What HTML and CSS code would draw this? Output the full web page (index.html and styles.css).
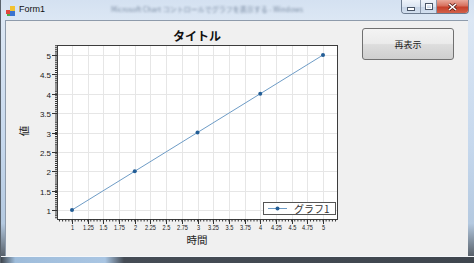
FILE: index.html
```html
<!DOCTYPE html>
<html lang="ja">
<head>
    <meta charset="UTF-8">
    <title>Form1</title>
    <link rel="stylesheet" href="styles.css">
</head>
<body>
<div class="window">
    <div class="titlebar">
        <svg class="app-icon" width="10" height="10" viewBox="0 0 10 10">
            <rect x="0" y="4" width="4" height="4" fill="#e0463a"/>
            <rect x="4" y="0" width="5" height="5" fill="#f2c230"/>
            <rect x="4" y="5" width="5" height="5" fill="#3b74d0"/>
            <rect x="1" y="8" width="3" height="2" fill="#4aa84a"/>
        </svg>
        <span class="title">Form1</span>
        <span class="ghost">Microsoft Chart コントロールでグラフを表示する - Windows</span>
        <div class="caption">
            <div class="cbtn min">
                <svg width="8" height="4" viewBox="0 0 8 4"><rect x="0.5" y="0.5" width="7" height="3" fill="#fff" stroke="#4a5668"/></svg>
            </div>
            <div class="cbtn max">
                <svg width="8" height="7" viewBox="0 0 8 7"><rect x="0.5" y="0.5" width="7" height="6" fill="none" stroke="#4a5668"/><rect x="1.5" y="1.5" width="5" height="4" fill="none" stroke="#fff"/></svg>
            </div>
            <div class="cbtn close">
                <svg width="9" height="8" viewBox="0 0 9 8"><path d="M1 1 L8 7 M8 1 L1 7" stroke="#5a2018" stroke-width="3"/><path d="M1 1 L8 7 M8 1 L1 7" stroke="#fff" stroke-width="1.6"/></svg>
            </div>
        </div>
    </div>
    <div class="client">
        <svg id="chart" class="chart" viewBox="6 21 349 235" width="349" height="235">
            <text class="chart-title" x="197" y="41" text-anchor="middle">タイトル</text>
            <rect x="57.5" y="45.5" width="280" height="174" fill="#fff"/>
            <g id="grid" stroke="#e6e6e6" stroke-width="1"></g>
            <rect x="57.5" y="45.5" width="280" height="174" fill="none" stroke="#3c3c3c"/>
            <line x1="56" y1="219" x2="56" y2="45" stroke="#333" stroke-width="2" stroke-dasharray="1 0.9375" stroke-dashoffset="1.1875"/>
            <line x1="57" y1="220.5" x2="337" y2="220.5" stroke="#333" stroke-width="2" stroke-dasharray="1 2.1375" stroke-dashoffset="1.1875"/>
            <g id="ticks" stroke="#333" stroke-width="1"></g>
            <g id="labels"></g>
            <polyline class="series" points="72,210 134.75,171.25 197.5,132.5 260.25,93.75 323,55"/>
            <g class="marker">
                <circle cx="72" cy="210" r="2"/>
                <circle cx="134.75" cy="171.25" r="2"/>
                <circle cx="197.5" cy="132.5" r="2"/>
                <circle cx="260.25" cy="93.75" r="2"/>
                <circle cx="323" cy="55" r="2"/>
            </g>
            <rect x="263.5" y="202.5" width="72" height="12" fill="#fff" stroke="#555"/>
            <line class="series" x1="268" y1="208.5" x2="287" y2="208.5"/>
            <circle class="marker" cx="277.5" cy="208.5" r="2"/>
            <text class="legend-text" x="294" y="212.5">グラフ1</text>
            <text class="axis-title" x="197" y="243.5" text-anchor="middle">時間</text>
            <text class="axis-title" x="0" y="0" text-anchor="middle" transform="translate(28 131) rotate(-90)">値</text>
        </svg>
        <button class="redraw">再表示</button>
    </div>
    <div class="bottom-frame"></div>
</div>
<script>
    var ns = "http://www.w3.org/2000/svg";
    var oGrid = document.getElementById("grid");
    var oTicks = document.getElementById("ticks");
    var oLabels = document.getElementById("labels");

    function px(v) {
        return 72 + (v - 1) * 62.75;
    }
    function py(v) {
        return 210 - (v - 1) * 38.75;
    }
    function add(parent, tag, attrs, text) {
        var el = document.createElementNS(ns, tag);
        for (var k in attrs) {
            el.setAttribute(k, attrs[k]);
        }
        if (text) {
            el.textContent = text;
        }
        parent.appendChild(el);
        return el;
    }

    for (var i = 0; i <= 16; i++) {
        var v = 1 + i * 0.25;
        var x = Math.round(px(v)) + 0.5;
        add(oGrid, "line", {x1: x, y1: 46, x2: x, y2: 219});
        add(oTicks, "line", {x1: x, y1: 219, x2: x, y2: 224});
        var s = String(v);
        var len = s.replace(".", "").length * 3.1 + (s.indexOf(".") > -1 ? 1.6 : 0);
        add(oLabels, "text", {"class": "xl", x: x, y: 229.5, "text-anchor": "middle",
            textLength: len, lengthAdjust: "spacingAndGlyphs"}, s);
    }
    for (var j = 0; j <= 8; j++) {
        var w = 1 + j * 0.5;
        var y = Math.round(py(w)) + 0.5;
        add(oGrid, "line", {x1: 58, y1: y, x2: 337, y2: y});
        add(oTicks, "line", {x1: 52, y1: y, x2: 57, y2: y});
        add(oLabels, "text", {"class": "yl", x: 51, y: y + 3, "text-anchor": "end"}, String(w));
    }
</script>
</body>
</html>
```

FILE: styles.css
```css
*{
    margin: 0;
    padding: 0;
}
body{
    background-color: #3d444c;
}
.window{
    width: 474px;
    height: 263px;
    display: flex;
    flex-direction: column;
    overflow: hidden;
    border-left: 1px solid #59626c;
    box-sizing: border-box;
    background: linear-gradient(to bottom, #d4e1f1 0, #dce7f4 20px, #c6d8ed 55%, #b4c9e0 85%, #5b646e 97%, #40474f 100%);
}
.titlebar{
    height: 20px;
    display: flex;
    align-items: flex-start;
    flex-shrink: 0;
}
.app-icon{
    margin: 6px 0 0 5px;
}
.title{
    margin-left: 3px;
    padding-top: 4px;
    font-family: "Liberation Sans", sans-serif;
    font-size: 9px;
    line-height: 11px;
    color: #111;
}
.ghost{
    margin-left: 66px;
    padding-top: 5px;
    white-space: nowrap;
    font-family: "Noto Sans CJK JP", sans-serif;
    font-size: 7px;
    line-height: 9px;
    color: #7d8ea4;
    filter: blur(1.2px);
}
.caption{
    margin-left: auto;
    margin-right: 5px;
    display: flex;
    height: 14px;
    border: 1px solid #6d7c90;
    border-top: none;
    border-radius: 0 0 4px 4px;
    overflow: hidden;
    box-sizing: border-box;
}
.cbtn{
    display: flex;
    align-items: center;
    justify-content: center;
    height: 13px;
}
.cbtn.min,
.cbtn.max{
    background: linear-gradient(to bottom, #eef3fa 0, #dbe5f2 50%, #c5d3e6 51%, #d3e0ef 100%);
    border-right: 1px solid #8a98ab;
}
.cbtn.min{
    width: 19px;
    align-items: flex-end;
    padding-bottom: 2px;
    box-sizing: border-box;
}
.cbtn.max{
    width: 15px;
}
.cbtn.close{
    width: 31px;
    background: linear-gradient(to bottom, #e9a99b 0, #d7705d 45%, #c6402a 55%, #d2604a 100%);
}
.client{
    margin: 0 5px 0 4px;
    width: 463px;
    height: 236px;
    flex-shrink: 0;
    display: flex;
    align-items: flex-start;
    background-color: #f0f0f0;
    border-top: 1px solid #8e9bab;
    border-left: 1px solid #8e9bab;
    box-sizing: border-box;
}
.chart{
    display: block;
    flex-shrink: 0;
}
.chart-title{
    font-family: "Noto Sans CJK JP", sans-serif;
    font-size: 12px;
    font-weight: bold;
    fill: #111;
}
.xl,
.yl{
    font-family: "Liberation Sans", sans-serif;
    font-size: 8px;
    fill: #1a1a1a;
}
.series{
    fill: none;
    stroke: #6e9cc6;
    stroke-width: 1;
}
.marker{
    fill: #245e96;
}
.legend-text{
    font-family: "Noto Sans CJK JP", sans-serif;
    font-size: 10px;
    fill: #333;
}
.axis-title{
    font-family: "Noto Sans CJK JP", sans-serif;
    font-size: 10.5px;
    fill: #222;
}
.redraw{
    width: 92px;
    height: 32px;
    margin: 7px 0 0 7px;
    border: 1px solid #707070;
    border-radius: 3px;
    background: linear-gradient(to bottom, #f3f3f3 0, #ebebeb 48%, #dddddd 52%, #cfcfcf 100%);
    font-family: "Noto Sans CJK JP", sans-serif;
    font-size: 9px;
    color: #222;
}
.bottom-frame{
    flex: 1;
    background: linear-gradient(to right, #3f464e 0, #9fbddb 3%, #a9c5e2 22%, #454c55 26%, #3f464e 100%);
    border-top: 1px solid #f4f7fb;
}
```
